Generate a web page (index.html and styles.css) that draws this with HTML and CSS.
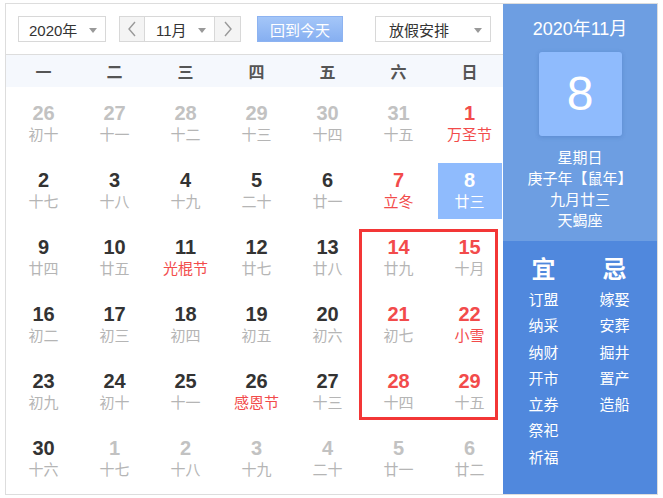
FILE: index.html
```html
<!DOCTYPE html>
<html>
<head>
  <meta charset="utf-8">
  <title>万年历</title>
  <link rel="stylesheet" href="styles.css">
</head>
<body>
  <div class="calendar">
    <div class="cal-main">
      <div class="toolbar">
        <div class="select year-select">
          <span>2020年</span>
          <i class="caret"></i>
        </div>
        <div class="month-group">
          <button class="nav-btn">
            <svg width="10" height="16" viewBox="0 0 10 16"><polyline points="8,1 2,8 8,15" fill="none" stroke="#999" stroke-width="1.4"/></svg>
          </button>
          <div class="select month-select">
            <span>11月</span>
            <i class="caret"></i>
          </div>
          <button class="nav-btn">
            <svg width="10" height="16" viewBox="0 0 10 16"><polyline points="2,1 8,8 2,15" fill="none" stroke="#999" stroke-width="1.4"/></svg>
          </button>
        </div>
        <button class="today-btn">回到今天</button>
        <div class="select holiday-select">
          <span>放假安排</span>
          <i class="caret"></i>
        </div>
      </div>

      <div class="week-head">
        <span>一</span><span>二</span><span>三</span><span>四</span><span>五</span><span>六</span><span>日</span>
      </div>

      <div class="days">
        <div class="day other"><b>26</b><em>初十</em></div>
        <div class="day other"><b>27</b><em>十一</em></div>
        <div class="day other"><b>28</b><em>十二</em></div>
        <div class="day other"><b>29</b><em>十三</em></div>
        <div class="day other"><b>30</b><em>十四</em></div>
        <div class="day other"><b>31</b><em>十五</em></div>
        <div class="day weekend"><b>1</b><em class="fest">万圣节</em></div>

        <div class="day"><b>2</b><em>十七</em></div>
        <div class="day"><b>3</b><em>十八</em></div>
        <div class="day"><b>4</b><em>十九</em></div>
        <div class="day"><b>5</b><em>二十</em></div>
        <div class="day"><b>6</b><em>廿一</em></div>
        <div class="day weekend"><b>7</b><em class="fest">立冬</em></div>
        <div class="day today"><b>8</b><em>廿三</em></div>

        <div class="day"><b>9</b><em>廿四</em></div>
        <div class="day"><b>10</b><em>廿五</em></div>
        <div class="day"><b>11</b><em class="fest">光棍节</em></div>
        <div class="day"><b>12</b><em>廿七</em></div>
        <div class="day"><b>13</b><em>廿八</em></div>
        <div class="day weekend"><b>14</b><em>廿九</em></div>
        <div class="day weekend"><b>15</b><em>十月</em></div>

        <div class="day"><b>16</b><em>初二</em></div>
        <div class="day"><b>17</b><em>初三</em></div>
        <div class="day"><b>18</b><em>初四</em></div>
        <div class="day"><b>19</b><em>初五</em></div>
        <div class="day"><b>20</b><em>初六</em></div>
        <div class="day weekend"><b>21</b><em>初七</em></div>
        <div class="day weekend"><b>22</b><em class="fest">小雪</em></div>

        <div class="day"><b>23</b><em>初九</em></div>
        <div class="day"><b>24</b><em>初十</em></div>
        <div class="day"><b>25</b><em>十一</em></div>
        <div class="day"><b>26</b><em class="fest">感恩节</em></div>
        <div class="day"><b>27</b><em>十三</em></div>
        <div class="day weekend"><b>28</b><em>十四</em></div>
        <div class="day weekend"><b>29</b><em>十五</em></div>

        <div class="day"><b>30</b><em>十六</em></div>
        <div class="day other"><b>1</b><em>十七</em></div>
        <div class="day other"><b>2</b><em>十八</em></div>
        <div class="day other"><b>3</b><em>十九</em></div>
        <div class="day other"><b>4</b><em>二十</em></div>
        <div class="day other"><b>5</b><em>廿一</em></div>
        <div class="day other"><b>6</b><em>廿二</em></div>
      </div>

      <!-- 周末框选 -->
      <div class="mark-box"></div>
    </div>

    <div class="cal-side">
      <div class="side-top">
        <div class="side-title">2020年11月</div>
        <div class="big-day">8</div>
        <div class="side-info">
          <p>星期日</p>
          <p>庚子年【鼠年】</p>
          <p>九月廿三</p>
          <p>天蝎座</p>
        </div>
      </div>
      <div class="side-bottom">
        <div class="yiji">
          <h3>宜</h3>
          <p>订盟</p>
          <p>纳采</p>
          <p>纳财</p>
          <p>开市</p>
          <p>立券</p>
          <p>祭祀</p>
          <p>祈福</p>
        </div>
        <div class="yiji">
          <h3>忌</h3>
          <p>嫁娶</p>
          <p>安葬</p>
          <p>掘井</p>
          <p>置产</p>
          <p>造船</p>
        </div>
      </div>
    </div>
  </div>
</body>
</html>
```

FILE: styles.css
```css
* {
  margin: 0;
  padding: 0;
  box-sizing: border-box;
}
body {
  font-family: "Liberation Sans", Arial, "Noto Sans CJK SC", sans-serif;
  background: #fff;
  color: #333;
}
button {
  border: none;
  outline: none;
  cursor: pointer;
  font-family: inherit;
}
.calendar {
  display: flex;
  width: 653px;
  height: 492px;
  margin: 3px 0 0 5px;
  border: 1px solid #ddd;
}

/* 左侧日历 */
.cal-main {
  position: relative;
  width: 497px;
}
.toolbar {
  display: flex;
  align-items: center;
  height: 51px;
  padding: 0 0 0 12px;
  border-bottom: 1px solid #ddd;
}
.select {
  position: relative;
  display: flex;
  align-items: center;
  height: 26px;
  border: 1px solid #d8d8d8;
  background: #fff;
  font-size: 15px;
  color: #333;
}
.caret {
  position: absolute;
  top: 11px;
  right: 8px;
  border: 4px solid transparent;
  border-top: 5px solid #999;
  border-bottom: none;
}
.year-select {
  width: 88px;
  padding-left: 10px;
}
.month-group {
  display: flex;
  margin-left: 13px;
}
.nav-btn {
  display: flex;
  align-items: center;
  justify-content: center;
  width: 26px;
  height: 26px;
  border: 1px solid #d8d8d8;
  background: #f4f4f4;
}
.nav-btn + .select {
  width: 69px;
  border-left: none;
  border-right: none;
  padding-left: 11px;
}
.month-select + .nav-btn {
  width: 27px;
}
.today-btn {
  width: 86px;
  height: 26px;
  margin-left: 16px;
  border: 1px solid #8db3f1;
  background: linear-gradient(#a4c6f8, #86aff1);
  color: #fff;
  font-size: 15px;
}
.holiday-select {
  width: 116px;
  margin-left: 32px;
  padding-left: 13px;
}

.week-head {
  display: grid;
  grid-template-columns: repeat(7, 71px);
  height: 32px;
  padding-left: 2px;
  align-items: center;
  justify-items: center;
  background: #f5f8fd;
  font-size: 16px;
  font-weight: bold;
  color: #555;
}

.days {
  display: grid;
  grid-template-columns: repeat(7, 71px);
  grid-auto-rows: 56px;
  row-gap: 11px;
  padding: 9px 0 0 2px;
  justify-items: center;
}
.day {
  display: flex;
  flex-direction: column;
  align-items: center;
  width: 64px;
  padding-top: 5px;
}
.day b {
  font-size: 20px;
  line-height: 24px;
  color: #333;
}
.day em {
  font-style: normal;
  font-size: 15px;
  line-height: 20px;
  color: #b5b5b5;
}
.day.other b {
  color: #c2c2c2;
}
.day.weekend b,
.day em.fest {
  color: #f24b4b;
}
.day.today {
  background: #8fbbfd;
}
.day.today b,
.day.today em {
  color: #fff;
}
.mark-box {
  position: absolute;
  left: 353px;
  top: 225px;
  width: 139px;
  height: 191px;
  border: 3px solid #f33636;
}

/* 右侧详情 */
.cal-side {
  display: flex;
  flex-direction: column;
  width: 154px;
  color: #fff;
}
.side-top {
  height: 237px;
  background: #6d9ee2;
  text-align: center;
  padding-top: 13px;
}
.side-title {
  font-size: 18px;
  line-height: 24px;
}
.big-day {
  width: 83px;
  height: 84px;
  margin: 11px auto 0;
  border-radius: 3px;
  background: #8fbbfd;
  box-shadow: 0 1px 4px rgba(40, 80, 150, .25);
  font-size: 48px;
  line-height: 84px;
}
.side-info {
  margin-top: 11px;
  font-size: 15px;
  line-height: 21px;
}
.side-bottom {
  flex: 1;
  display: grid;
  grid-template-columns: 71px 71px;
  padding: 14px 0 0 5px;
  background: #5088dd;
}
.yiji {
  text-align: center;
}
.yiji h3 {
  font-size: 24px;
  line-height: 30px;
  margin-bottom: 2px;
}
.yiji p {
  font-size: 15px;
  line-height: 26.3px;
}
```
